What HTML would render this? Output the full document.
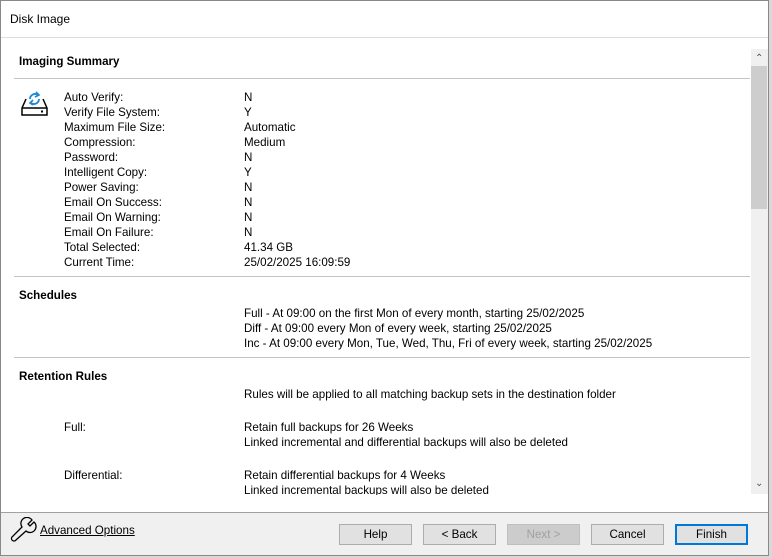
<!DOCTYPE html>
<html><head><meta charset="utf-8"><style>
*{margin:0;padding:0;box-sizing:border-box}
body{width:772px;height:558px;background:#d8d8d8;font-family:"Liberation Sans",sans-serif;font-size:11.6px;color:#000;position:relative;overflow:hidden}
.win{position:absolute;left:0;top:0;width:769px;height:556px;background:#f0f0f0;border:1px solid #888}
.title{position:absolute;left:0;top:0;width:767px;height:36px;background:#fff;font-size:12px;padding:11px 0 0 9px}
.main{position:absolute;left:0;top:36px;width:767px;height:476px;background:#fff;border-top:1px solid #ddd;border-bottom:1px solid #a0a0a0;overflow:hidden}
.clip{position:absolute;left:0;top:-1px;width:767px;height:458px;overflow:hidden}
.t{position:absolute;white-space:nowrap;line-height:15px}
.h{font-weight:bold}
.sep{position:absolute;left:13px;width:736px;height:1px;background:#c4c4c4}
.sb{position:absolute;left:750px;top:11px;width:17px;height:445px;background:#f0f0f0}
.thumb{position:absolute;left:750px;top:28px;width:16px;height:143px;background:#cdcdcd}
.btn{position:absolute;top:523px;width:73px;height:21px;border:1px solid #adadad;background:#e1e1e1;text-align:center;line-height:19px}
</style></head><body>
<div class="win">
<div class="title">Disk Image</div>
<div class="main">
<div class="clip">
<div class="t h" style="left:18px;top:17px">Imaging Summary</div>
<div class="sep" style="top:41px"></div>
<svg style="position:absolute;left:19px;top:50px" width="30" height="30" viewBox="0 0 30 30">
<path d="M6 12 L2 21 L2 28 L27 28 L27 21 L23 12" fill="none" stroke="#000" stroke-width="1.5"/>
<path d="M2 21 L27 21" stroke="#000" stroke-width="1.5"/>
<rect x="21" y="23.5" width="2" height="2" fill="#000"/>
<path d="M10 12 A5 5 0 0 1 18 8" fill="none" stroke="#1a8ad4" stroke-width="1.8"/>
<path d="M16 5 L19 8 L15 10" fill="none" stroke="#1a8ad4" stroke-width="1.6"/>
<path d="M19 12 A5 5 0 0 1 11 16" fill="none" stroke="#1a8ad4" stroke-width="1.8"/>
<path d="M13 13 L10 16 L13 18" fill="none" stroke="#1a8ad4" stroke-width="1.6"/>
</svg>
<div class="t" style="left:63px;top:53px">Auto Verify:<br>Verify File System:<br>Maximum File Size:<br>Compression:<br>Password:<br>Intelligent Copy:<br>Power Saving:<br>Email On Success:<br>Email On Warning:<br>Email On Failure:<br>Total Selected:<br>Current Time:</div>
<div class="t" style="left:243px;top:53px">N<br>Y<br>Automatic<br>Medium<br>N<br>Y<br>N<br>N<br>N<br>N<br>41.34 GB<br>25/02/2025 16:09:59</div>
<div class="sep" style="top:239px"></div>
<div class="t h" style="left:18px;top:251px">Schedules</div>
<div class="t" style="left:243px;top:269px">Full - At 09:00 on the first Mon of every month, starting 25/02/2025<br>Diff - At 09:00 every Mon of every week, starting 25/02/2025<br>Inc - At 09:00 every Mon, Tue, Wed, Thu, Fri of every week, starting 25/02/2025</div>
<div class="sep" style="top:320px"></div>
<div class="t h" style="left:18px;top:332px">Retention Rules</div>
<div class="t" style="left:243px;top:350px">Rules will be applied to all matching backup sets in the destination folder</div>
<div class="t" style="left:63px;top:383px">Full:</div>
<div class="t" style="left:243px;top:383px">Retain full backups for 26 Weeks<br>Linked incremental and differential backups will also be deleted</div>
<div class="t" style="left:63px;top:431px">Differential:</div>
<div class="t" style="left:243px;top:431px">Retain differential backups for 4 Weeks<br>Linked incremental backups will also be deleted</div>
</div>
<div class="sb"></div>
<div class="thumb"></div>
<div class="t" style="left:754px;top:13px;font-size:10px;color:#555">&#8963;</div>
<div class="t" style="left:754px;top:438px;font-size:10px;color:#555">&#8964;</div>
</div>
<svg style="position:absolute;left:9px;top:516px" width="28" height="26" viewBox="0 0 28 26">
<path d="M22 3 L18 7 L20 9 L24 5 A6 6 0 0 1 16 14 L6 23 A2.5 2.5 0 0 1 2 20 L12 10 A6 6 0 0 1 22 3 Z" fill="none" stroke="#000" stroke-width="1.3"/>
</svg>
<div class="t" style="left:39px;top:522px;text-decoration:underline">Advanced Options</div>
<div class="btn" style="left:338px">Help</div>
<div class="btn" style="left:422px">&lt; Back</div>
<div class="btn" style="left:506px;color:#a0a0a0;background:#ccc;border-color:#bfbfbf">Next &gt;</div>
<div class="btn" style="left:590px">Cancel</div>
<div class="btn" style="left:674px;border:2px solid #0078d7;line-height:17px">Finish</div>
</div>
</body></html>
